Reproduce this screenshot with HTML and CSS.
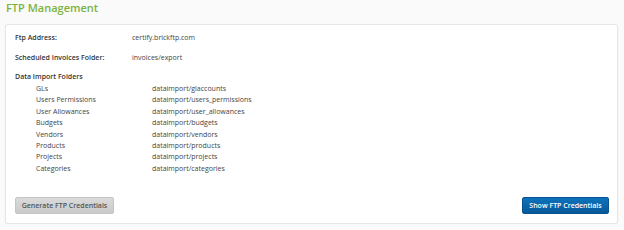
FILE: index.html
```html
<!DOCTYPE html>
<html lang="en">
  <head>
    <meta charset="UTF-8" />
    <title>FTP Management</title>
    <link rel="stylesheet" href="styles.css">
  </head>
  <body>
    <h1 class="page-title">FTP Management</h1>

    <div class="card">
      <div class="row">
        <span class="label">Ftp Address:</span>
        <span class="value">certify.brickftp.com</span>
      </div>
      <div class="row">
        <span class="label">Scheduled Invoices Folder:</span>
        <span class="value">invoices/export</span>
      </div>

      <div class="section-title">Data Import Folders</div>
      <ul class="folders">
        <li><span class="folder-name">GLs</span><span>dataimport/glaccounts</span></li>
        <li><span class="folder-name">Users Permissions</span><span>dataimport/users_permissions</span></li>
        <li><span class="folder-name">User Allowances</span><span>dataimport/user_allowances</span></li>
        <li><span class="folder-name">Budgets</span><span>dataimport/budgets</span></li>
        <li><span class="folder-name">Vendors</span><span>dataimport/vendors</span></li>
        <li><span class="folder-name">Products</span><span>dataimport/products</span></li>
        <li><span class="folder-name">Projects</span><span>dataimport/projects</span></li>
        <li><span class="folder-name">Categories</span><span>dataimport/categories</span></li>
      </ul>

      <div class="actions">
        <button class="btn btn-grey">Generate FTP Credentials</button>
        <button class="btn btn-blue">Show FTP Credentials</button>
      </div>
    </div>
  </body>
</html>
```

FILE: styles.css
```css
* {
  margin: 0;
  padding: 0;
  box-sizing: border-box;
}

body {
  background: #fafafa;
  font-family: "Open Sans", "Liberation Sans", sans-serif;
  color: #333;
}

/* title */
.page-title {
  font-size: 11px;
  font-weight: 600;
  line-height: 16px;
  color: #7ab342;
  padding: 0 0 0 6px;
  margin-bottom: 8px;
}

/* card */
.card {
  margin: 0 6px 0 5px;
  height: 200px;
  background: #fff;
  border: 1px solid #e6e6e6;
  border-radius: 3px;
  box-shadow: 0 1px 2px rgba(0, 0, 0, 0.06);
  padding: 7px 8px 9px 9px;
  display: flex;
  flex-direction: column;
}

.row {
  display: flex;
  font-size: 7px;
  line-height: 12px;
  margin-bottom: 8px;
}

.row .label {
  width: 117px;
  font-weight: 600;
  color: #333;
}

.row .value {
  color: #444;
}

.section-title {
  font-size: 7px;
  font-weight: 600;
  line-height: 12px;
  margin-top: -1px;
}

.folders {
  list-style: none;
  padding-left: 21px;
  font-size: 7px;
  line-height: 11.4px;
  color: #444;
}

.folders li {
  display: flex;
}

.folders .folder-name {
  width: 116px;
}

/* buttons */
.actions {
  margin-top: auto;
  display: flex;
  justify-content: space-between;
}

.btn {
  font-family: "Open Sans", "Liberation Sans", sans-serif;
  font-size: 7px;
  font-weight: 600;
  height: 17px;
  border-radius: 2px;
  cursor: pointer;
}

.btn-grey {
  width: 99px;
  color: #555;
  background: linear-gradient(#dadada, #cacaca);
  border: 1px solid #c4c4c4;
}

.btn-blue {
  width: 87px;
  color: #fff;
  background: linear-gradient(#0d72bb, #07599a);
  border: 1px solid #06538f;
}
```
